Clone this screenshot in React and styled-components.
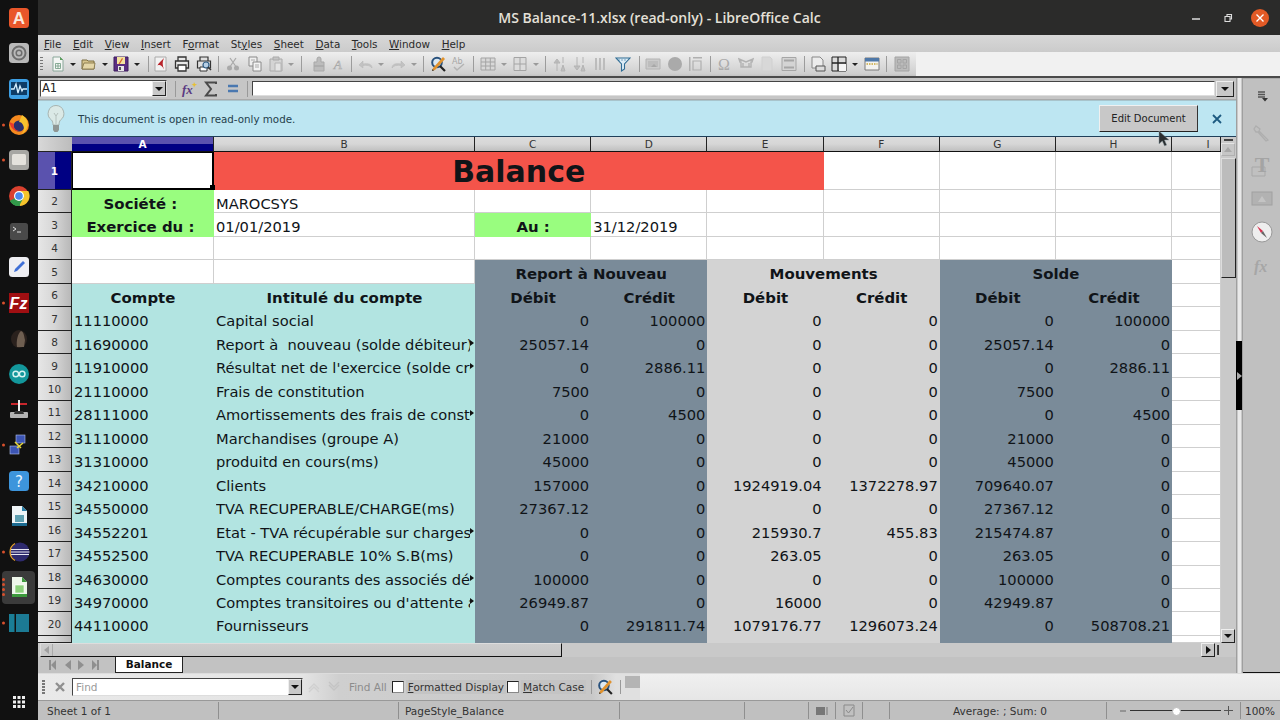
import React from 'react';
import styled, { createGlobalStyle } from 'styled-components';

const Global = createGlobalStyle`
  html, body { margin: 0; padding: 0; background: #111; overflow: hidden; }
  * { box-sizing: border-box; }
`;
const UI = `"DejaVu Sans", "Liberation Sans", sans-serif`;

const Screen = styled.div`width:1280px;height:720px;display:flex;overflow:hidden;position:relative;font-family:${UI};color:#222;`;
const Dock = styled.nav`width:38px;height:720px;flex:none;background:#111;display:flex;flex-direction:column;`;
const DockItem = styled.div`height:35.6px;flex:none;display:flex;align-items:center;justify-content:center;position:relative;
  ${p => p.$active && `&::before{content:"";position:absolute;left:2px;right:3px;top:1px;bottom:1px;border-radius:4px;background:#3b3b3b;}`}
  svg{position:relative;}
  ${p => p.$last && `margin-top:auto;margin-bottom:0;`}`;
const Dots = styled.div`position:absolute;left:2px;top:50%;transform:translateY(-50%);display:flex;flex-direction:column;gap:2px;z-index:1;`;
const Dot = styled.i`display:block;width:3px;height:3px;border-radius:50%;background:#d8502c;`;
const Main = styled.div`width:1242px;flex:none;display:flex;flex-direction:column;`;
const TitleBar = styled.header`height:35px;flex:none;background:#2b2b2a;color:#e4e0d8;display:flex;align-items:center;position:relative;justify-content:center;
  font:600 14px "Open Sans","Noto Sans",sans-serif;`;
const TitleText = styled.span`margin-left:1px;`;
const WinButtons = styled.div`position:absolute;right:11px;top:9px;display:flex;align-items:center;gap:14px;`;
const WinBtn = styled.span`width:18px;height:18px;display:flex;align-items:center;justify-content:center;${p => p.$close && `background:#e25a26;border-radius:50%;`}`;
const MenuBar = styled.div`height:17px;flex:none;background:linear-gradient(#d8d8d8,#cbcbcb);display:flex;align-items:center;padding-left:6px;gap:11.6px;font-size:10.4px;color:#2a2a2a;`;
const Mnemonic = styled.u`text-underline-offset:1px;`;
const ToolRow = styled.div`height:26px;flex:none;background:#f1f1f1;display:flex;border-bottom:2px solid #4a4a4a;`;
const ToolGroup = styled.div`display:flex;align-items:center;padding-left:2px;height:24px;background:linear-gradient(#eeeeee,#cfcfcf 90%,#c4c4c4);`;
const Slot = styled.span`width:${p => p.$w}px;height:20px;flex:none;display:flex;align-items:center;justify-content:center;`;
const Grip = styled.span`width:3px;height:14px;margin-right:7px;flex:none;background:repeating-linear-gradient(#777 0 1.5px,transparent 1.5px 3px);`;
const Sep = styled.span`width:1px;height:16px;background:#9c9c9c;display:block;`;
const Arrow = styled.span`width:0;height:0;border-left:3px solid transparent;border-right:3px solid transparent;border-top:3px solid ${p => p.$off ? '#9a9a9a' : '#222'};display:block;`;
const Middle = styled.div`height:595px;flex:none;display:flex;position:relative;`;
const LeftCol = styled.div`width:1198px;flex:none;display:flex;flex-direction:column;`;
const FormulaBar = styled.div`height:22px;flex:none;background:#c6c6c6;display:flex;align-items:center;padding-left:2px;border-bottom:1px solid #aaa;`;
const Field = styled.div`background:#fff;height:17px;border:1px solid;border-color:#444 #ddd #ddd #444;font-size:11.5px;line-height:15px;padding-left:1px;display:flex;justify-content:space-between;position:relative;`;
const NameBox = styled(Field)`width:127px;margin-right:5px;`;
const ComboBtn = styled.span`width:14px;height:15px;flex:none;background:#c8c8c8;border:1px solid;border-color:#eee #222 #222 #eee;display:flex;align-items:center;justify-content:center;`;
const Tri = styled.span`width:0;height:0;border-left:4px solid transparent;border-right:4px solid transparent;border-top:4px solid #111;display:block;`;
const FormulaIcon = styled.span`width:21.5px;flex:none;display:flex;justify-content:center;`;
const BarSep = styled.span`width:1px;height:16px;background:#999;margin:0 3px;flex:none;`;
const FormulaInput = styled(Field)`width:963px;margin-left:1px;height:15px;`;
const FormulaDrop = styled(ComboBtn)`width:18px;height:16px;margin-left:1px;`;
const InfoBar = styled.div`height:37px;flex:none;background:#bde6f2;border-top:1px solid #a8c4cc;border-bottom:1px solid #20405a;display:flex;align-items:center;font-size:10.3px;color:#24404c;padding-left:8px;`;
const InfoText = styled.span`margin-left:12px;flex:1;`;
const EditButton = styled.button`width:99px;height:27px;font:10px ${UI};color:#222;background:#c8c8c8;border:1px solid;border-color:#f0f0f0 #333 #222 #f0f0f0;padding:0;margin-right:9px;`;
const CloseX = styled.span`width:20px;margin-right:9px;display:flex;justify-content:center;`;
const SheetArea = styled.div`height:506px;flex:none;display:flex;`;
const SheetGrid = styled.div`width:1183px;flex:none;display:grid;overflow:hidden;background:#fff;
  grid-template-columns:34px 142px 261px repeat(6,116.2px) 48.8px;
  grid-template-rows:15px 38px repeat(19,23.47px) 7.07px;`;
const Corner = styled.div`background:linear-gradient(90deg,#d8d8d8,#bcbcbc);border-bottom:1px solid #222;`;
const ColHead = styled.div`font-size:10.5px;line-height:14px;text-align:center;border-right:1px solid #222;border-bottom:1px solid #111;overflow:hidden;
  color:${p => p.$sel ? '#fff' : '#333'};font-weight:${p => p.$sel ? 700 : 400};padding-left:${p => p.$pad || 0}px;
  background:${p => p.$sel ? 'linear-gradient(#5a52ae 0 50%,#000083 50%)' : 'linear-gradient(#dcdcdc,#d6d6d6 50%,#bfbfbf)'};`;
const RowHead = styled.div`font-size:10.5px;display:flex;align-items:center;justify-content:center;border-bottom:1px solid #222;border-right:1px solid #222;
  color:${p => p.$sel ? '#fff' : '#333'};font-weight:${p => p.$sel ? 700 : 400};
  background:${p => p.$sel ? 'linear-gradient(90deg,#5a52ae 0 50%,#000083 50%)' : 'linear-gradient(90deg,#e6e6e6,#d6d6d6 50%,#b8b8b8)'};`;
const fills = { white:'#fff', red:'#f4544a', green:'#99fd7f', teal:'#b2e4e1', slate:'#7a8b99', gray:'#d3d3d3' };
const Cell = styled.div`position:relative;grid-column:span ${p => p.$span || 1};overflow:${p => p.$active ? 'visible' : 'hidden'};white-space:pre;
  background:${p => fills[p.$fill || 'white']};
  ${p => (!p.$fill || p.$fill === 'white') && `border-right:1px solid #cfcfcf;border-bottom:1px solid #cfcfcf;`}
  font-size:${p => p.$title ? '30px' : p.$bold ? '14.95px' : '14.67px'};font-weight:${p => p.$bold ? 700 : 400};color:#101418;
  text-align:${p => p.$align || 'left'};line-height:${p => p.$title ? '39px' : '22px'};padding:${p => p.$title ? 0 : '3px 2px 0 2px'};
  ${p => p.$clip && `padding-right:5px;`}
  ${p => p.$active && `z-index:2;border:1px solid #000;border-width:1px 2px 2px 1px;`}`;
const ClipText = styled.span`display:block;overflow:hidden;`;
const Overflow = styled.i`position:absolute;right:1px;top:9px;width:0;height:0;border-top:3px solid transparent;border-bottom:3px solid transparent;border-left:4px solid #111;`;
const Handle = styled.i`position:absolute;left:137px;top:32px;width:5px;height:5px;background:#000;z-index:2;`;
const VScroll = styled.div`width:15px;flex:none;background:#c9c9c9;display:flex;flex-direction:column;`;
const SplitTop = styled.div`height:6px;flex:none;display:flex;align-items:center;padding:0 3px;&::after{content:"";display:block;height:2px;width:100%;background:#444;}`;
const ScrollBtn = styled.div`width:${p => p.$w || 14}px;height:${p => p.$h || 13}px;flex:none;background:#c6c6c6;border:1px solid;display:flex;align-items:center;justify-content:center;
  border-color:${p => p.$off ? '#e4e4e4 #b0b0b0 #b0b0b0 #e4e4e4' : '#eee #222 #222 #eee'};`;
const VThumb = styled.div`height:120px;margin-top:2px;flex:none;background:#bcbcbc;border:1px solid;border-color:#ddd #222 #222 #ddd;`;
const VSpace = styled.div`flex:1;`;
const HRow = styled.div`height:14px;flex:none;display:flex;background:#c9c9c9;`;
const HThumb = styled.div`width:522px;margin-left:2px;height:14px;flex:none;background:linear-gradient(#cdcdcd,#c6c6c6);border:1px solid;border-color:#ddd #111 #111 #ddd;display:flex;`;
const HBtn = styled.div`width:12px;height:12px;border-right:1px solid #aaa;display:flex;align-items:center;justify-content:center;`;
const HSpace = styled.div`flex:1;`;
const HSplit = styled.div`width:6px;flex:none;display:flex;justify-content:center;margin-right:15px;margin-left:0;&::after{content:"";display:block;width:1px;height:10px;margin-top:2px;background:#333;border-left:1px solid #444;}`;
const TabRow = styled.div`height:16px;flex:none;background:#c2c2c2;display:flex;align-items:flex-start;`;
const TabNav = styled.div`width:77px;flex:none;display:flex;align-items:center;height:16px;padding-left:10px;gap:6.5px;`;
const Tab = styled.div`width:68px;height:16px;background:#fff;border:1px solid #222;border-top:none;font-size:10.5px;font-weight:700;text-align:center;line-height:15px;color:#111;`;
const Strip = styled.div`width:7px;flex:none;background:#c8c8c8;border-left:1px solid #9f9f9f;border-right:1px solid #9f9f9f;position:relative;
  &::before{content:"";position:absolute;left:1px;top:0;bottom:0;width:3px;background:#e9e9e9;}`;
const SideHandle = styled.div`position:absolute;left:-1px;top:263px;width:6px;height:69px;background:#000;display:flex;align-items:center;
  &::after{content:"";border-top:4px solid transparent;border-bottom:4px solid transparent;border-left:5px solid #aaa;margin-left:1px;}`;
const Sidebar = styled.aside`width:37px;flex:none;background:#c0c0c0;display:flex;flex-direction:column;align-items:center;padding-top:1px;height:594px;border-top:1px solid #aaa;`;
const SideBtn = styled.div`height:${p => p.$h}px;flex:none;display:flex;align-items:center;justify-content:center;width:100%;`;
const FindBar = styled.div`height:27px;flex:none;background:linear-gradient(#f0f0f0,#e6e6e6);display:flex;border-top:1px solid #dcdcdc;`;
const FindGroup = styled.div`display:flex;align-items:center;height:26px;padding-left:4px;font-size:11px;width:602px;background:linear-gradient(90deg,#e9e9e9 0,#e4e4e4 44%,#cfcfcf 50%,#c8c8c8 92%,#e0e0e0 96%);border-bottom:0;`;
const FindClose = styled.span`margin-left:2px;display:flex;`;
const FindBox = styled(Field)`width:233px;height:18px;margin-left:6px;color:#9a9a9a;padding-left:3px;line-height:16px;font-size:10.5px;`;
const FindDrop = styled(ComboBtn)`height:16px;color:#000;`;
const NavIcon = styled.span`width:20px;flex:none;display:flex;justify-content:center;`;
const NavGroup = styled.span`display:flex;margin-left:1px;`;
const FindAll = styled.span`color:#8c8c8c;margin-left:5px;margin-right:5px;white-space:nowrap;font-size:10.5px;`;
const Check = styled.span`width:12px;height:12px;flex:none;background:#fff;border:1px solid;border-color:#222 #888 #888 #222;margin-right:2px;`;
const CheckLabel = styled.span`background:#c4c4c4;padding:1px 2px;white-space:nowrap;font-size:10.5px;color:#333;margin-right:${p => p.$mr || 0}px;`;
const FindSep = styled.span`width:1px;height:14px;background:#999;margin:0 ${p => p.$r ?? 5}px 0 ${p => p.$l ?? 5}px;flex:none;`;
const GhostSquare = styled.span`width:15px;height:12px;flex:none;background:#b4b4b4;align-self:flex-start;margin-top:2px;`;
const StatusBar = styled.footer`height:20px;flex:none;background:#c0c0c0;border-top:1px solid #999;display:flex;align-items:center;font-size:10.5px;color:#333;`;
const StatusCell = styled.div`width:${p => p.$w}px;flex:none;height:17px;display:flex;align-items:center;gap:${p => p.$gap || 0}px;
  padding-left:${p => p.$pl || 0}px;justify-content:${p => p.$center ? 'center' : 'flex-start'};
  white-space:nowrap;${p => !p.$last && `border-right:1px solid #8f8f8f;`}`;
const ZoomTrack = styled.div`width:91px;height:1px;background:#333;position:relative;margin:0 3px;
  &::after{content:"";position:absolute;left:42px;top:-3px;width:7px;height:7px;border-radius:50%;background:#fff;border:1px solid #bbb;}`;
const Cursor = styled.svg`position:absolute;left:1158px;top:130px;z-index:5;`;

/* ---------- toolbar icon drawings ---------- */
const G = '#a9a9a9';
const icons = {
  new: <><path d="M3 1h7l3 3v11H3z" fill="#f4f6f4" stroke="#8aa79a"/><path d="M10 1l3 3h-3z" fill="#5aa05a"/><path d="M5.5 7.5h5v5h-5zM8 7.5v5M5.5 10h5" fill="none" stroke="#6f9a80" strokeWidth=".8"/></>,
  open: <><path d="M1 13V4h5l1 1h6v8z" fill="#d6c48e" stroke="#7d6e42"/><path d="M3 7h11l-1 6H1z" fill="#e4d6a8" stroke="#7d6e42" strokeWidth=".8"/></>,
  save: <><path d="M1 1h14v14H1z" fill="#5a2d82" stroke="#3c1d5c"/><path d="M4 1h8v7H4z" fill="#f3e3a0"/><path d="M9 2L6 7l-.7 1.6L7 7.7l3-5z" fill="#d9662a"/><path d="M5 10h6v5H5z" fill="#e8e8e8"/><path d="M6 11h2v3H6z" fill="#555"/></>,
  pdf: <><path d="M2 1h11v14H2z" fill="#f2f2f2" stroke="#aaa"/><path d="M11 2C7 6 5 8 4.500 9.500c2.500-1 4-.5 6.500 4C9.500 9.500 9 6 11 2z" fill="#b8232a"/></>,
  print: <><path d="M4 1h8v4H4zM1.500 5h13v7h-13z" fill="#e9e9e9" stroke="#333" strokeWidth="1.300"/><path d="M4 9h8v6H4z" fill="#fff" stroke="#333" strokeWidth="1.300"/></>,
  preview: <><path d="M4 1h8v4H4zM1.500 5h13v7h-13z" fill="#e0e0e0" stroke="#333" strokeWidth="1.200"/><path d="M4 11h7v4H4z" fill="#fff" stroke="#333"/><circle cx="10" cy="9" r="3" fill="#b8d0e6" stroke="#2e5c84" strokeWidth="1.200"/><path d="M12 11l3 3" stroke="#333" strokeWidth="1.500"/></>,
  cut: <><circle cx="4.500" cy="12" r="2.500" fill={G}/><circle cx="11.500" cy="12" r="2.500" fill={G}/><path d="M5.500 10L11 2M10.500 10L5 2" stroke={G} strokeWidth="1.200"/></>,
  copy: <><path d="M2 1h8v9H2z" fill="#efefef" stroke="#8a8a8a"/><path d="M6 6h8v9H6z" fill="#f4f4f4" stroke="#8a8a8a"/><path d="M4 4h4M8 9h4M8 11h4" stroke="#aaa"/></>,
  paste: <><path d="M2 3h12v12H2z" fill="#d4d4d4" stroke="#aaa"/><path d="M5 1h6v3H5z" fill="#c4c4c4" stroke="#aaa"/><path d="M7 7h6v8H7z" fill="#e4e4e4" stroke="#b4b4b4"/></>,
  clone: <><path d="M6 6V3a2 2 0 0 1 4 0v3h3v4H3V6zM3 10h10v5H3z" fill="#bcbcbc" stroke="#a8a8a8"/></>,
  eraser: <><text x="2" y="14" fontSize="15" fontFamily="Liberation Serif" fill="none" stroke="#a9a9a9" strokeWidth=".7" fontStyle="italic">A</text></>,
  undo: <path d="M14 12c0-4-4-5-9-4V5L1 9l4 3V9.500c4-.5 7 0 9 2.500z" fill="#c2c2c2" stroke="#b4b4b4" strokeWidth=".5"/>,
  redo: <path d="M2 12c0-4 4-5 9-4V5l4 4-4 3V9.500c-4-.5-7 0-9 2.500z" fill="#c2c2c2" stroke="#b4b4b4" strokeWidth=".5"/>,
  find: <><circle cx="7" cy="6.500" r="4.800" fill="#dbe8f2" stroke="#27507c" strokeWidth="2"/><path d="M10 10l5 5" stroke="#222" strokeWidth="2.200"/><path d="M13 1L3 12l-1 3 3-1L15 3z" fill="#e0922e"/><path d="M2.500 13l-.5 2 2-.5z" fill="#333"/></>,
  spell: <><text x="1" y="8" fontSize="8" fontFamily="DejaVu Sans" fill="#a6a6a6">Ab</text><path d="M3 11l3 3 7-6" fill="none" stroke="#b4b4b4" strokeWidth="1.500"/></>,
  borders: <path d="M1 2h14v12H1zM1 6h14M1 10h14M5.700 2v12M10.300 2v12" fill="#d8d8d8" stroke="#a4a4a4"/>,
  table2: <path d="M2 1.500h12v13H2zM2 8h12M8 1.500v13" fill="#dcdcdc" stroke="#a4a4a4"/>,
  sortA: <path d="M5 15V5M5 3L2 7h6zM11 1v6M11 9l-2 6h4z" fill="#bfbfbf" stroke="#b4b4b4"/>,
  sortD: <path d="M5 1v10M5 14l-3-4h6zM11 1v6M11 9l-2 6h4z" fill="#bfbfbf" stroke="#b4b4b4"/>,
  sortB: <path d="M4 2v12M8 2v12M12 2v12" stroke="#bcbcbc" strokeWidth="2"/>,
  filter: <path d="M1 2h14L9.500 8v5L6.500 15V8zM4 3.500v1M7 3.500v1M10 3.500v1" fill="#dcecf6" stroke="#2e6c94" strokeWidth="1.100"/>,
  image: <><path d="M1 3h14v10H1z" fill="#cbcbcb" stroke="#b4b4b4"/><path d="M3 5h10v6H3z" fill="#bdbdbd"/><path d="M6 11l3-3 3 3z" fill="#a8a8a8"/></>,
  chart: <circle cx="8" cy="8" r="7" fill="#aaaaaa"/>,
  pivot: <><path d="M5 5h8v9H5z" fill="none" stroke="#b0b0b0" strokeWidth="1.200"/><path d="M1 1h1.500v14H1zM5 1h9v1.500H5z" fill="#b0b0b0"/></>,
  omega: <text x="1" y="14" fontSize="16" fontFamily="Liberation Serif" fill="#ababab">Ω</text>,
  link: <path d="M1 3l7 3 7-3-1 3-1 0v5H3V6H2zM5 7v4M11 7v4" fill="none" stroke="#b2b2b2" strokeWidth="1.400"/>,
  comment: <path d="M3 1h8l2 2v12H3z" fill="#d8d8d8" stroke="#d0d0d0"/>,
  head: <><path d="M1 1.500h14v13H1z" fill="#d4d4d4" stroke="#a6a6a6"/><path d="M3 4.500h10M3 11.500h10" stroke="#a6a6a6" strokeWidth="2"/></>,
  area: <><path d="M2 1h8l3 3v8H2z" fill="#ececec" stroke="#888"/><path d="M6 10h9v5H6z" fill="#dcdcdc" stroke="#555"/></>,
  freeze: <><path d="M1 1h14v14H1z" fill="#dcdcdc" stroke="#222"/><path d="M1 7h14M7 1v14" stroke="#222" strokeWidth="1.300"/><path d="M8 8h7v7H8z" fill="#f4f4f4"/></>,
  headers: <><path d="M1 2h14v12H1z" fill="#f3f3f0" stroke="#7a7a7a"/><path d="M1 2h14v3.500H1z" fill="#4e78a8"/><path d="M2.500 8h11" stroke="#c9a83a" strokeWidth="1.300" strokeDasharray="1.500 1"/></>,
  grid4: <><path d="M1 1h14v14H1z" fill="#bbb" stroke="#a4a4a4"/><path d="M3.500 3.500h3.500v3.500H3.500zM9 3.500h3.500v3.500H9zM3.500 9h3.500v3.500H3.500zM9 9h3.500v3.500H9z" fill="none" stroke="#a4a4a4"/></>,
};
const Ico = ({ n, s = 16 }) => <svg width={s} height={s} viewBox="0 0 16 16">{icons[n]}</svg>;

const toolbar = [
  ['new', 16], ['a', 14], ['open', 18], ['a', 14], ['save', 18], ['a', 14], ['s', 8], ['pdf', 18], ['print', 24], ['preview', 20], ['s', 8],
  ['cut', 22], ['copy', 22], ['paste', 20], ['o', 10], ['s', 10], ['clone', 26], ['eraser', 14], ['s', 10], ['undo', 20], ['o', 10], ['redo', 24], ['o', 8], ['s', 10],
  ['find', 20], ['spell', 22], ['s', 6], ['borders', 24], ['o', 8], ['table2', 24], ['o', 8], ['s', 10], ['sortA', 20], ['sortD', 20], ['sortB', 20], ['filter', 26], ['s', 6],
  ['image', 22], ['chart', 22], ['pivot', 20], ['s', 8], ['omega', 22], ['link', 20], ['comment', 22], ['head', 22], ['s', 8], ['area', 20], ['freeze', 22], ['a', 10], ['headers', 24], ['s', 4], ['grid4', 28],
];

/* ---------- dock icon drawings ---------- */
const Tile = ({ c }) => <rect x="1" y="1" width="20" height="20" rx="3.500" fill={c} />;
const dock = [
  { i: <><Tile c="#e9562a" /><text x="11" y="17" textAnchor="middle" fontSize="17" fontWeight="700" fontFamily="Liberation Sans" fill="#fbe7dc">A</text></> },
  { i: <><Tile c="#b9b9b9" /><circle cx="11" cy="11" r="6.500" fill="none" stroke="#6d6d6d" strokeWidth="2" /><circle cx="11" cy="11" r="2.800" fill="none" stroke="#6d6d6d" strokeWidth="1.500" /></> },
  { i: <><Tile c="#3d9fe4" /><rect x="3" y="4" width="16" height="13" fill="#0e3c66" /><path d="M3 11h3l2-5 2 9 2-7 2 5 1-2h4" fill="none" stroke="#d5efff" strokeWidth="1.300" /></> },
  { i: <><circle cx="11" cy="11" r="10" fill="#f58a1f" /><circle cx="11" cy="12" r="5.500" fill="#2a2f6e" /><path d="M14 1c5 3 7 8 5 13-1 3-4 6-8 7 5-2 6-6 4-10-1-2-2-3-4-3 1-2 2-5 3-7z" fill="#f6c12d" /><path d="M1.500 8C2 13 6 18 11 17c-4-1-6-4-5-7z" fill="#e8392b" /></>, dot: 1 },
  { i: <><Tile c="#a7a7a3" /><rect x="4" y="5" width="14" height="11" rx="1.500" fill="#e4e2dc" /></>, dot: 1 },
  { i: <><circle cx="11" cy="11" r="10" fill="#d9412f" /><path d="M11 11L2 16a10 10 0 0 0 9 5 10 10 0 0 0 1-.1z" fill="#329a4a" /><path d="M11 6h9.300a10 10 0 0 1-8.300 15z" fill="#f5c42c" /><path d="M11 11L2 16a10 10 0 0 0 9 5l5-9z" fill="#329a4a" /><circle cx="11" cy="11" r="5" fill="#fff" /><circle cx="11" cy="11" r="3.800" fill="#4a88ec" /></> },
  { i: <><rect x="2" y="3" width="18" height="17" rx="2.500" fill="#4a4a4a" /><path d="M5 7l3 2-3 2" fill="none" stroke="#ddd" strokeWidth="1" /><path d="M9 12h4" stroke="#ddd" /></> },
  { i: <><Tile c="#eeeef2" /><path d="M6 16l1-3 8-8 2 2-8 8z" fill="#3f6fd6" /></> },
  { i: <><rect x="1" y="1" width="20" height="20" fill="#a00f12" /><text x="10.500" y="17" textAnchor="middle" fontSize="16" fontWeight="700" fontStyle="italic" fontFamily="Liberation Sans" fill="#fff">Fz</text></>, dot: 1 },
  { i: <><ellipse cx="11" cy="12" rx="8" ry="9" fill="#2a211d" /><path d="M9 20c-1-6 1-14 4-16 3 1 3 5 4 9l-1 7z" fill="#6e5e50" /></> },
  { i: <><circle cx="11" cy="11" r="10" fill="#13979b" /><path d="M5 11a2.800 2.800 0 0 1 5.600 0 2.800 2.800 0 0 1-5.600 0zM11.400 11a2.800 2.800 0 0 1 5.600 0 2.800 2.800 0 0 1-5.600 0z" fill="none" stroke="#d8f4f2" strokeWidth="1.400" /></> },
  { i: <><rect x="2" y="14" width="18" height="6" rx="1" fill="#b4b4b4" /><path d="M3 5h16v2H3z" fill="#c8262c" /><path d="M10 2h2v13h-2z" fill="#eee" /><path d="M7 13h8l1 3H6z" fill="#333" /></> },
  { i: <><rect x="8" y="1" width="9" height="8" fill="#3c55b4" stroke="#b4c4ee" strokeWidth=".6" /><rect x="2" y="12" width="9" height="8" fill="#3c55b4" stroke="#b4c4ee" strokeWidth=".6" /><path d="M9 14l6-5M7 8l6 6" stroke="#e6d63a" strokeWidth="1.500" /></>, dot: 1 },
  { i: <><Tile c="#3d95dc" /><text x="11" y="16.500" textAnchor="middle" fontSize="15" fontFamily="DejaVu Sans" fill="#e8f4fc">?</text></> },
  { i: <><path d="M4 1h10l5 5v15H4z" fill="#eef4f6" /><path d="M14 1l5 5h-5z" fill="#2a7fa8" /><rect x="7" y="10" width="9" height="7" fill="#5d9fb0" /><path d="M4 18h15v3H4z" fill="#1b6a90" /></> },
  { i: <><circle cx="12" cy="11" r="9.500" fill="#2e2a6e" /><path d="M3 8.500h18M2.500 11h19M3 13.500h18" stroke="#e8e8f2" strokeWidth="1.100" /><path d="M7 2.500a9.800 9.800 0 0 0 0 17" fill="none" stroke="#e4a02e" strokeWidth="1.300" /></>, dot: 1 },
  { i: <><path d="M4 1h10l5 5v15H4z" fill="#eef6ea" /><path d="M14 1l5 5h-5z" fill="#3d9a3d" /><rect x="7" y="9" width="9" height="8" fill="#8bd07a" stroke="#fff" strokeWidth=".6" /><path d="M4 18h15v3H4z" fill="#3d9a3d" /></>, dots: 4, active: 1 },
  { i: <><rect x="1" y="2" width="5.500" height="18" fill="#1a7e96" /><rect x="8" y="2" width="13" height="18" fill="#1c7a94" /></>, dot: 1 },
];

/* ---------- sheet data ---------- */
const data = [
  ['11110000', 'Capital social', '0', '100000', '0', '0', '0', '100000'],
  ['11690000', 'Report à  nouveau (solde débiteur)', '25057.14', '0', '0', '0', '25057.14', '0', 1],
  ['11910000', "Résultat net de l'exercice (solde créditeur)", '0', '2886.11', '0', '0', '0', '2886.11', 1],
  ['21110000', 'Frais de constitution', '7500', '0', '0', '0', '7500', '0'],
  ['28111000', 'Amortissements des frais de constitution', '0', '4500', '0', '0', '0', '4500', 1],
  ['31110000', 'Marchandises (groupe A)', '21000', '0', '0', '0', '21000', '0'],
  ['31310000', 'produitd en cours(ms)', '45000', '0', '0', '0', '45000', '0'],
  ['34210000', 'Clients', '157000', '0', '1924919.04', '1372278.97', '709640.07', '0'],
  ['34550000', 'TVA RECUPERABLE/CHARGE(ms)', '27367.12', '0', '0', '0', '27367.12', '0'],
  ['34552201', 'Etat - TVA récupérable sur charges', '0', '0', '215930.7', '455.83', '215474.87', '0', 1],
  ['34552500', 'TVA RECUPERABLE 10% S.B(ms)', '0', '0', '263.05', '0', '263.05', '0'],
  ['34630000', 'Comptes courants des associés débiteurs', '100000', '0', '0', '0', '100000', '0', 1],
  ['34970000', "Comptes transitoires ou d'attente actif", '26949.87', '0', '16000', '0', '42949.87', '0', 1],
  ['44110000', 'Fournisseurs', '0', '291811.74', '1079176.77', '1296073.24', '0', '508708.21'],
];
const numFill = ['slate', 'slate', 'gray', 'gray', 'slate', 'slate'];

const menus = [['', 'F', 'ile'], ['', 'E', 'dit'], ['', 'V', 'iew'], ['', 'I', 'nsert'], ['F', 'o', 'rmat'], ['St', 'y', 'les'], ['', 'S', 'heet'], ['', 'D', 'ata'], ['', 'T', 'ools'], ['', 'W', 'indow'], ['', 'H', 'elp']];

const Blank = ({ n = 1 }) => Array.from({ length: n }, (_, i) => <Cell key={i} />);

export default function App() {
  return (
    <Screen>
      <Global />
      <Dock>
        {dock.map((d, i) => (
          <DockItem key={i} $active={d.active}>
            {d.dot && <Dots><Dot /></Dots>}
            {d.dots && <Dots>{[0, 1, 2, 3].map(k => <Dot key={k} />)}</Dots>}
            <svg width="22" height="22" viewBox="0 0 22 22">{d.i}</svg>
          </DockItem>
        ))}
        <DockItem $last>
          <svg width="16" height="16" viewBox="0 0 16 16" fill="#eee">
            {[2, 6.500, 11].flatMap(y => [2, 6.500, 11].map(x => <rect key={`${x}-${y}`} x={x} y={y} width="3" height="3" />))}
          </svg>
        </DockItem>
      </Dock>
      <Main>
        <TitleBar>
          <TitleText>MS Balance-11.xlsx (read-only) - LibreOffice Calc</TitleText>
          <WinButtons>
            <WinBtn><svg width="10" height="10"><path d="M1 6h8" stroke="#ddd" strokeWidth="1.500" /></svg></WinBtn>
            <WinBtn><svg width="10" height="10"><path d="M2 3.500h5v5H2z M4 3V1.500h4.500V6H7.500" fill="none" stroke="#ddd" strokeWidth="1.100" /></svg></WinBtn>
            <WinBtn $close><svg width="10" height="10"><path d="M1.500 1.500l7 7M8.500 1.500l-7 7" stroke="#fff" strokeWidth="1.400" /></svg></WinBtn>
          </WinButtons>
        </TitleBar>
        <MenuBar>
          {menus.map(([a, m, b]) => <span key={a + m + b}>{a}<Mnemonic>{m}</Mnemonic>{b}</span>)}
        </MenuBar>
        <ToolRow>
          <ToolGroup>
            <Grip />
            {toolbar.map(([n, w], i) => (
              <Slot key={i} $w={w}>
                {n === 's' ? <Sep /> : n === 'a' ? <Arrow /> : n === 'o' ? <Arrow $off /> : <Ico n={n} />}
              </Slot>
            ))}
          </ToolGroup>
        </ToolRow>
        <Middle>
          <LeftCol>
            <FormulaBar>
              <NameBox>A1<ComboBtn><Tri /></ComboBtn></NameBox>
              <BarSep />
              <FormulaIcon>
                <svg width="18" height="16" viewBox="0 0 18 16"><text x="1" y="13" fontSize="13" fontStyle="italic" fontWeight="700" fontFamily="Liberation Serif" fill="#5a3a82">fx</text><path d="M13 1l1 2 2 .5-2 1-1 2-.5-2-2-1 2-.5z" fill="#e8c030" /></svg>
              </FormulaIcon>
              <FormulaIcon>
                <svg width="14" height="16" viewBox="0 0 14 16"><path d="M12 3V1.500H2L7 8l-5 6.500h10V13" fill="none" stroke="#4a4a4a" strokeWidth="2" /></svg>
              </FormulaIcon>
              <FormulaIcon>
                <svg width="14" height="12" viewBox="0 0 14 12"><path d="M2 3h10M2 8h10" stroke="#4a78b0" strokeWidth="2.500" /></svg>
              </FormulaIcon>
              <BarSep />
              <FormulaInput />
              <FormulaDrop><Tri /></FormulaDrop>
            </FormulaBar>
            <InfoBar>
              <svg width="20" height="30" viewBox="0 0 20 30"><path d="M10 1.500a8 8 0 0 0-4.500 14.500c1 1 1.500 3 1.500 5h6c0-2 .5-4 1.500-5A8 8 0 0 0 10 1.500z" fill="#dbe9e6" stroke="#a8b4b0" /><path d="M7 21h6v5l-1.500 2h-3L7 26z" fill="#8f9693" /><path d="M8 9l2 3 2-3M10 12v8" fill="none" stroke="#b4c0bc" /></svg>
              <InfoText>This document is open in read-only mode.</InfoText>
              <EditButton>Edit Document</EditButton>
              <CloseX><svg width="10" height="10"><path d="M1 1l8 8M9 1l-8 8" stroke="#1c5a80" strokeWidth="1.800" /></svg></CloseX>
            </InfoBar>
            <SheetArea>
              <SheetGrid>
                <Corner />
                <ColHead $sel>A</ColHead>
                {['B', 'C', 'D', 'E', 'F', 'G', 'H'].map(c => <ColHead key={c}>{c}</ColHead>)}
                <ColHead $pad={24}>I</ColHead>

                <RowHead $sel>1</RowHead>
                <Cell $active><Handle /></Cell>
                <Cell $fill="red" $span={4} $title $bold $align="center">Balance</Cell>
                <Blank n={4} />

                <RowHead>2</RowHead>
                <Cell $fill="green" $bold $align="center">Société : </Cell>
                <Cell>MAROCSYS</Cell>
                <Blank n={7} />

                <RowHead>3</RowHead>
                <Cell $fill="green" $bold $align="center">Exercice du : </Cell>
                <Cell>01/01/2019</Cell>
                <Cell $fill="green" $bold $align="center">Au :</Cell>
                <Cell>31/12/2019</Cell>
                <Blank n={5} />

                <RowHead>4</RowHead>
                <Blank n={9} />

                <RowHead>5</RowHead>
                <Blank n={2} />
                <Cell $fill="slate" $span={2} $bold $align="center">Report à Nouveau</Cell>
                <Cell $fill="gray" $span={2} $bold $align="center">Mouvements</Cell>
                <Cell $fill="slate" $span={2} $bold $align="center">Solde</Cell>
                <Cell />

                <RowHead>6</RowHead>
                <Cell $fill="teal" $bold $align="center">Compte</Cell>
                <Cell $fill="teal" $bold $align="center">Intitulé du compte</Cell>
                {['Débit', 'Crédit', 'Débit', 'Crédit', 'Débit', 'Crédit'].map((t, i) => (
                  <Cell key={i} $fill={numFill[i]} $bold $align="center">{t}</Cell>
                ))}
                <Cell />

                {data.map((r, i) => (
                  <React.Fragment key={r[0]}>
                    <RowHead>{i + 7}</RowHead>
                    <Cell $fill="teal">{r[0]}</Cell>
                    <Cell $fill="teal" $clip={r[8]}>
                      <ClipText>{r[1]}</ClipText>
                      {r[8] && <Overflow />}
                    </Cell>
                    {r.slice(2, 8).map((v, k) => (
                      <Cell key={k} $fill={numFill[k]} $align="right">{v}</Cell>
                    ))}
                    <Cell />
                  </React.Fragment>
                ))}

                <RowHead />
                <Cell $fill="teal" />
                <Cell $fill="teal" />
                {numFill.map((f, k) => <Cell key={k} $fill={f} />)}
                <Cell />
              </SheetGrid>
              <VScroll>
                <SplitTop />
                <ScrollBtn $off><svg width="8" height="5"><path d="M4 0l4 5H0z" fill="#a8a8a8" /></svg></ScrollBtn>
                <VThumb />
                <VSpace />
                <ScrollBtn $h={14}><Tri /></ScrollBtn>
              </VScroll>
            </SheetArea>
            <HRow>
              <HThumb>
                <HBtn><svg width="5" height="8"><path d="M5 0v8L0 4z" fill="#a0a0a0" /></svg></HBtn>
              </HThumb>
              <HSpace />
              <ScrollBtn $h={14}><svg width="5" height="8"><path d="M0 0v8l5-4z" fill="#111" /></svg></ScrollBtn>
              <HSplit />
            </HRow>
            <TabRow>
              <TabNav>
                <svg width="8" height="10"><path d="M1 0h2v10H1zM8 0v10L3 5z" fill="#8f8f8f" /></svg>
                <svg width="8" height="10"><path d="M8 0v10L2 5z" fill="#8f8f8f" /></svg>
                <svg width="8" height="10"><path d="M1 0v10l6-5z" fill="#8f8f8f" /></svg>
                <svg width="8" height="10"><path d="M5 0h2v10H5zM0 0v10l5-5z" fill="#8f8f8f" /></svg>
              </TabNav>
              <Tab>Balance</Tab>
            </TabRow>
          </LeftCol>
          <Strip><SideHandle /></Strip>
          <Sidebar>
            <SideBtn $h={32}><svg width="14" height="14" viewBox="0 0 14 14"><path d="M3 3h7M3 5.500h7M3 8h7" stroke="#555" strokeWidth="1.300" /><path d="M7 9h6l-3 3.500z" fill="#333" /></svg></SideBtn>
            <SideBtn $h={42}><svg width="18" height="18" viewBox="0 0 18 18"><path d="M3 2l4 3-1 2 9 9-2 1-8-9H3L1 5z" fill="none" stroke="#aeaeae" strokeWidth="1.300" /></svg></SideBtn>
            <SideBtn $h={22}><svg width="22" height="24" viewBox="0 0 22 24"><path d="M1 14h13v9H1z" fill="none" stroke="#a8a8a8" /><text x="11" y="19" textAnchor="middle" fontSize="22" fontWeight="700" fontFamily="Liberation Serif" fill="#a4a4a4">T</text></svg></SideBtn>
            <SideBtn $h={46}><svg width="22" height="16" viewBox="0 0 22 16"><rect x="1" y="1" width="20" height="13" fill="#b2b2b2" stroke="#a0a0a0" /><path d="M11 5l4 6H7z" fill="#c4c4c4" /></svg></SideBtn>
            <SideBtn $h={20}><svg width="22" height="22" viewBox="0 0 22 22"><circle cx="11" cy="11" r="10" fill="#eee" stroke="#999" /><path d="M6 5l6 5-2 2z" fill="#d8304e" /><path d="M16 17l-6-5 2-2z" fill="#666" /></svg></SideBtn>
            <SideBtn $h={48}><svg width="18" height="18" viewBox="0 0 18 18"><text x="1" y="15" fontSize="16" fontStyle="italic" fontFamily="Liberation Serif" fontWeight="700" fill="#a6a6a6">fx</text></svg></SideBtn>
          </Sidebar>
        </Middle>
        <FindBar>
          <FindGroup>
            <Grip />
            <FindClose><svg width="12" height="12" viewBox="0 0 12 12"><path d="M2 2l8 8M10 2l-8 8" stroke="#8f8f8f" strokeWidth="2.400" /></svg></FindClose>
            <FindBox>Find<FindDrop><Tri /></FindDrop></FindBox>
            <NavGroup>
              <NavIcon><svg width="14" height="12"><path d="M2 8l5-5 5 5M2 11l5-5 5 5" fill="none" stroke="#d0d0d0" strokeWidth="1.400" /></svg></NavIcon>
              <NavIcon><svg width="14" height="12"><path d="M2 1l5 5 5-5M2 4l5 5 5-5" fill="none" stroke="#c4c4c4" strokeWidth="1.400" /></svg></NavIcon>
            </NavGroup>
            <FindAll>Find All</FindAll>
            <Check />
            <CheckLabel $mr={1}><Mnemonic>F</Mnemonic>ormatted Display</CheckLabel>
            <Check />
            <CheckLabel><Mnemonic>M</Mnemonic>atch Case</CheckLabel>
            <FindSep />
            <Ico n="find" />
            <FindSep $l={7} $r={4} />
            <GhostSquare />
          </FindGroup>
        </FindBar>
        <StatusBar>
          <StatusCell $w={181} $pl={9}>Sheet 1 of 1</StatusCell>
          <StatusCell $w={180} />
          <StatusCell $w={221} $pl={6}>PageStyle_Balance</StatusCell>
          <StatusCell $w={125} />
          <StatusCell $w={64} />
          <StatusCell $w={27} $center><svg width="14" height="10"><path d="M1 1h9v8H1z" fill="#777" /><path d="M12 1v8" stroke="#777" /></svg></StatusCell>
          <StatusCell $w={27} $center><svg width="12" height="13" viewBox="0 0 12 13"><path d="M1 1h10v11H1z" fill="none" stroke="#8a8a8a" /><path d="M3 6l2.500 3L10 3" fill="none" stroke="#8a8a8a" /></svg></StatusCell>
          <StatusCell $w={27} />
          <StatusCell $w={217} $pl={63}>Average: ; Sum: 0</StatusCell>
          <StatusCell $w={134} $pl={12}>
            <svg width="8" height="8"><path d="M1 4h6" stroke="#666" /></svg>
            <ZoomTrack />
            <svg width="9" height="9"><path d="M0 4.500h9M4.500 0v9" stroke="#555" /></svg>
          </StatusCell>
          <StatusCell $w={39} $last $pl={4}>100%</StatusCell>
        </StatusBar>
      </Main>
      <Cursor width="14" height="18" viewBox="0 0 14 18"><path d="M1 1v13l3.300-3 2.200 5 2.200-1-2.200-5H11z" fill="#2a2e30" stroke="#8a9aa0" strokeWidth=".5" /></Cursor>
    </Screen>
  );
}
